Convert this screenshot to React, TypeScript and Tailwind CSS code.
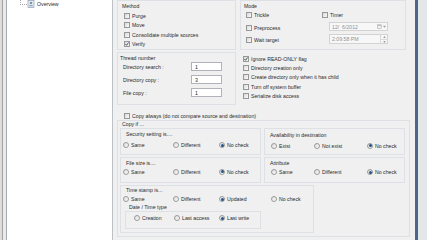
import React from "react";

function Check({ checked }: { checked?: boolean }) {
  return (
    <span className="flex w-[6px] h-[6px] shrink-0 items-center justify-center border border-[#979797] bg-gradient-to-br from-[#d9d9d9] to-[#fbfbfb]">
      {checked && (
        <svg viewBox="0 0 4 4" className="w-[4px] h-[4px]">
          <path d="M0.4 2 L1.6 3.3 L3.6 0.5" stroke="#3a4656" strokeWidth="0.9" fill="none" />
        </svg>
      )}
    </span>
  );
}

function Radio({ checked }: { checked?: boolean }) {
  return (
    <span className="flex w-[6px] h-[6px] shrink-0 items-center justify-center rounded-full border border-[#9a9a9a] bg-gradient-to-br from-[#dadada] to-white">
      {checked && <span className="w-[3px] h-[3px] rounded-full bg-[#24528f]" />}
    </span>
  );
}

function CheckItem({ label, checked }: { label: string; checked?: boolean }) {
  return (
    <div className="flex items-center gap-[2px] whitespace-nowrap">
      <Check checked={checked} />
      <span>{label}</span>
    </div>
  );
}

function RadioItem({ label, checked }: { label: string; checked?: boolean }) {
  return (
    <div className="flex items-center gap-[2px] whitespace-nowrap">
      <Radio checked={checked} />
      <span>{label}</span>
    </div>
  );
}

export default function App() {
  return (
    <div className="flex w-[427px] h-[240px] overflow-hidden bg-[#f0f0f0] text-[5.2px] leading-[6px] text-[#2a2a2a] font-['Liberation_Sans',Arial,sans-serif]">
      {/* left window frame */}
      <div className="flex w-[7px] shrink-0">
        <div className="w-[2px] bg-[#dcdcdc]" />
        <div className="w-[1px] bg-[#a3a3a3]" />
        <div className="w-[3px] bg-[#eaeaea]" />
        <div className="w-[1px] bg-[#a4aab0]" />
      </div>

      {/* tree pane */}
      <div className="w-[106px] shrink-0 bg-white border-r border-[#bcc1c6]">
        <div className="flex items-start h-[9px]">
          <div className="ml-[13px] w-[7px] h-[5px] border-l border-b border-dotted border-[#a8a8a8]" />
          <svg viewBox="0 0 8 8" className="w-[8px] h-[8px]">
            <rect x="1" y="0.5" width="6" height="7" fill="#e8eef5" stroke="#7d8fa5" strokeWidth="0.6" />
            <circle cx="4" cy="3" r="1.3" fill="#7c93b0" />
            <rect x="2.2" y="5" width="3.6" height="1.3" fill="#9aabbf" />
          </svg>
          <span className="ml-[2px] mt-[1px] text-[#2a2a2a]">Overview</span>
        </div>
      </div>

      {/* main panel */}
      <div className="w-[302px] shrink-0 flex flex-col pl-[4px] pr-[5px]">
        {/* row 1 */}
        <div className="flex h-[50px] gap-[4px]">
          <div className="w-[119px] border border-[#dde1e5] pl-[4px] pt-[2px]">
            <div>Method</div>
            <div className="ml-[2px] mt-[2px] flex flex-col">
              <div className="h-[9.5px] flex items-center"><CheckItem label="Purge" /></div>
              <div className="h-[9.5px] flex items-center"><CheckItem label="Move" /></div>
              <div className="h-[9.5px] flex items-center"><CheckItem label="Consolidate multiple sources" /></div>
              <div className="h-[9.5px] flex items-center"><CheckItem label="Verify" checked /></div>
            </div>
          </div>
          <div className="w-[166px] border border-[#dde1e5] pl-[3px] pt-[2px]">
            <div>Mode</div>
            <div className="ml-[2px] grid grid-cols-[76px_1fr]">
              <div className="h-[12.5px] flex items-center"><CheckItem label="Trickle" /></div>
              <div className="h-[12.5px] flex items-center pb-[1px]"><CheckItem label="Timer" /></div>
              <div className="h-[12.5px] flex items-center"><CheckItem label="Preprocess" /></div>
              <div className="h-[12.5px] flex items-center pb-[2px]">
                <div className="ml-[7px] w-[59px] h-[9px] border border-[#d3d3d3] bg-[#f7f7f7] flex items-center justify-between pl-[2px] pr-[1px] text-[#929292]">
                  <span>12/&nbsp;&nbsp;6/2012</span>
                  <div className="flex items-center gap-[1px]">
                    <svg viewBox="0 0 6 6" className="w-[5px] h-[5px]">
                      <rect x="0.5" y="1" width="5" height="4.5" fill="#eeeeee" stroke="#a8a8a8" strokeWidth="0.6" />
                      <rect x="0.5" y="1" width="5" height="1.2" fill="#b8b8b8" />
                    </svg>
                    <svg viewBox="0 0 4 4" className="w-[3px] h-[3px]">
                      <path d="M0 1 L4 1 L2 3.5 Z" fill="#9a9a9a" />
                    </svg>
                  </div>
                </div>
              </div>
              <div className="h-[12.5px] flex items-center"><CheckItem label="Wait target" /></div>
              <div className="h-[12.5px] flex items-center pb-[2px]">
                <div className="ml-[7px] w-[59px] h-[10px] border border-[#d3d3d3] bg-[#f7f7f7] flex items-center justify-between pl-[2px] text-[#929292]">
                  <span>2:09:58 PM</span>
                  <div className="flex flex-col w-[7px] h-full border-l border-[#dadada]">
                    <div className="flex-1 flex items-center justify-center border-b border-[#dadada]">
                      <svg viewBox="0 0 4 3" className="w-[3px] h-[2px]"><path d="M0 3 L4 3 L2 0 Z" fill="#a0a0a0" /></svg>
                    </div>
                    <div className="flex-1 flex items-center justify-center">
                      <svg viewBox="0 0 4 3" className="w-[3px] h-[2px]"><path d="M0 0 L4 0 L2 3 Z" fill="#a0a0a0" /></svg>
                    </div>
                  </div>
                </div>
              </div>
            </div>
          </div>
        </div>

        {/* row 2 */}
        <div className="flex mt-[2px] h-[53px]">
          <div className="w-[119px] border border-[#dde1e5] pt-[2px]">
            <div className="pl-[2px]">Thread number</div>
            <div className="mt-[1px] flex flex-col gap-[4px] pl-[5px]">
              <div className="flex items-center h-[9px]">
                <span className="w-[68px]">Directory search :</span>
                <div className="w-[31px] h-[9px] border border-[#b0b3ba] bg-white pl-[3px] flex items-center">1</div>
              </div>
              <div className="flex items-center h-[9px]">
                <span className="w-[68px]">Directory copy :</span>
                <div className="w-[31px] h-[9px] border border-[#b0b3ba] bg-white pl-[3px] flex items-center">3</div>
              </div>
              <div className="flex items-center h-[9px]">
                <span className="w-[68px]">File copy :</span>
                <div className="w-[31px] h-[9px] border border-[#b0b3ba] bg-white pl-[3px] flex items-center">1</div>
              </div>
            </div>
          </div>
          <div className="ml-[7px] pt-[2.5px] flex flex-col">
            <div className="h-[9.2px] flex items-center"><CheckItem label="Ignore READ-ONLY flag" checked /></div>
            <div className="h-[9.2px] flex items-center"><CheckItem label="Directory creation only" /></div>
            <div className="h-[9.2px] flex items-center"><CheckItem label="Create directory only when it has child" /></div>
            <div className="h-[9.2px] flex items-center"><CheckItem label="Turn off system buffer" /></div>
            <div className="h-[9.2px] flex items-center"><CheckItem label="Serialize disk access" /></div>
          </div>
        </div>

        {/* row 3 */}
        <div className="mt-[7px] h-[8px] ml-[7px] flex items-center">
          <CheckItem label="Copy always (do not compare source and destination)" />
        </div>

        {/* row 4: copy if */}
        <div className="w-[293px] h-[117px] border border-[#dde1e5]">
          <div className="h-[7px] leading-[7px] pl-[4px]">Copy if ...</div>
          <div className="ml-[2px] grid grid-cols-[141px_141px] gap-x-[3px]">
            <div className="h-[27px] border border-[#dde1e5] pt-[1.5px]">
              <div className="pl-[5px]">Security setting is....</div>
              <div className="mt-[5.5px] pl-[2px] flex items-center h-[6px]">
                <div className="w-[50px]"><RadioItem label="Same" /></div>
                <div className="w-[46px]"><RadioItem label="Different" /></div>
                <div><RadioItem label="No check" checked /></div>
              </div>
            </div>
            <div className="h-[27px] border border-[#dde1e5] pt-[2.5px]">
              <div className="pl-[5px]">Availability in destination</div>
              <div className="mt-[5px] pl-[6px] flex items-center h-[6px]">
                <div className="w-[43px]"><RadioItem label="Exist" /></div>
                <div className="w-[53px]"><RadioItem label="Not exist" /></div>
                <div><RadioItem label="No check" checked /></div>
              </div>
            </div>
            <div className="mt-[2px] h-[26px] border border-[#dde1e5] pt-[2px]">
              <div className="pl-[5px]">File size is....</div>
              <div className="mt-[2.5px] pl-[2px] flex items-center h-[6px]">
                <div className="w-[50px]"><RadioItem label="Same" /></div>
                <div className="w-[46px]"><RadioItem label="Different" /></div>
                <div><RadioItem label="No check" checked /></div>
              </div>
            </div>
            <div className="mt-[2px] h-[26px] border border-[#dde1e5] pt-[2px]">
              <div className="pl-[5px]">Attribute</div>
              <div className="mt-[3px] pl-[6px] flex items-center h-[6px]">
                <div className="w-[43px]"><RadioItem label="Same" /></div>
                <div className="w-[53px]"><RadioItem label="Different" /></div>
                <div><RadioItem label="No check" checked /></div>
              </div>
            </div>
          </div>
          <div className="ml-[2px] mt-[2px] w-[194px] h-[48px] border border-[#dde1e5] pt-[0.5px]">
            <div className="pl-[5px]">Time stamp is...</div>
            <div className="mt-[3.5px] pl-[2px] flex items-center h-[6px]">
              <div className="w-[50px]"><RadioItem label="Same" /></div>
              <div className="w-[46px]"><RadioItem label="Different" /></div>
              <div className="w-[52px]"><RadioItem label="Updated" checked /></div>
              <div><RadioItem label="No check" /></div>
            </div>
            <div className="mt-[2px] pl-[8px]">Date / Time type</div>
            <div className="ml-[4px] mt-[1px] w-[136px] h-[18px] border border-[#dde1e5] pt-[3px] pl-[8px]">
              <div className="flex items-center h-[6px]">
                <div className="w-[40px]"><RadioItem label="Creation" /></div>
                <div className="w-[45px]"><RadioItem label="Last access" /></div>
                <div><RadioItem label="Last write" checked /></div>
              </div>
            </div>
          </div>
        </div>
      </div>

      <div className="w-[3px] shrink-0 bg-[#4b6888]" />
      <div className="flex-1 bg-[#e4e7ea]" />
    </div>
  );
}
